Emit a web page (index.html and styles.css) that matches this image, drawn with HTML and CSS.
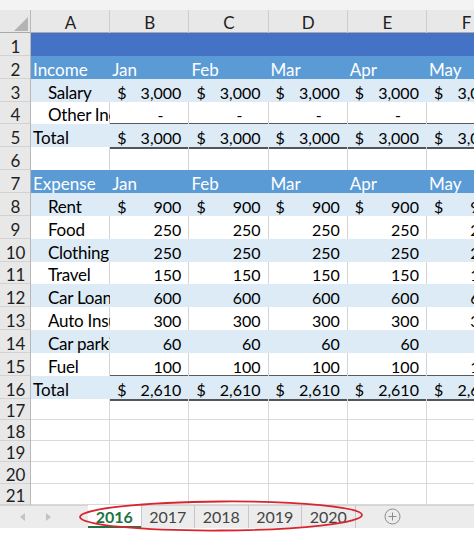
FILE: index.html
```html
<!DOCTYPE html>
<html>
<head>
<meta charset="utf-8">
<link rel="stylesheet" href="styles.css">
</head>
<body>
<div class="page">
  <div class="topbar"></div>
  <div class="grid">
    <table class="sheet">
      <colgroup>
        <col class="c-rn"><col class="c"><col class="c"><col class="c"><col class="c"><col class="c"><col class="c">
      </colgroup>
      <tr class="hdr">
        <th class="corner"><svg width="31" height="22" viewBox="0 0 31 22"><polygon points="14,20 28,20 28,6" fill="#b4b4b4"/></svg></th>
        <th>A</th><th>B</th><th>C</th><th>D</th><th>E</th><th>F</th>
      </tr>
      <tr class="rd dark">
        <th class="rn">1</th><td></td><td></td><td></td><td></td><td></td><td></td>
      </tr>
      <tr class="rd mid">
        <th class="rn">2</th><td class="lbl">Income</td><td class="lbl">Jan</td><td class="lbl">Feb</td><td class="lbl">Mar</td><td class="lbl">Apr</td><td class="lbl">May</td>
      </tr>
      <tr class="rd light">
        <th class="rn">3</th><td class="ind">Salary</td>
        <td><div class="acc"><span>$</span><span>3,000</span></div></td>
        <td><div class="acc"><span>$</span><span>3,000</span></div></td>
        <td><div class="acc"><span>$</span><span>3,000</span></div></td>
        <td><div class="acc"><span>$</span><span>3,000</span></div></td>
        <td><div class="acc"><span>$</span><span>3,000</span></div></td>
      </tr>
      <tr class="rd white">
        <th class="rn">4</th><td class="ind clip">Other Income</td>
        <td class="dash pre">-</td><td class="dash pre">-</td><td class="dash pre">-</td><td class="dash pre">-</td><td class="dash pre">-</td>
      </tr>
      <tr class="rd light">
        <th class="rn">5</th><td class="lbl">Total</td>
        <td><div class="acc"><span>$</span><span>3,000</span></div></td>
        <td><div class="acc"><span>$</span><span>3,000</span></div></td>
        <td><div class="acc"><span>$</span><span>3,000</span></div></td>
        <td><div class="acc"><span>$</span><span>3,000</span></div></td>
        <td><div class="acc"><span>$</span><span>3,000</span></div></td>
      </tr>
      <tr class="rd white">
        <th class="rn">6</th><td></td><td class="post"></td><td class="post"></td><td class="post"></td><td class="post"></td><td class="post"></td>
      </tr>
      <tr class="rd mid">
        <th class="rn">7</th><td class="lbl">Expense</td><td class="lbl">Jan</td><td class="lbl">Feb</td><td class="lbl">Mar</td><td class="lbl">Apr</td><td class="lbl">May</td>
      </tr>
      <tr class="rd light">
        <th class="rn">8</th><td class="ind">Rent</td>
        <td><div class="acc"><span>$</span><span>900</span></div></td>
        <td><div class="acc"><span>$</span><span>900</span></div></td>
        <td><div class="acc"><span>$</span><span>900</span></div></td>
        <td><div class="acc"><span>$</span><span>900</span></div></td>
        <td><div class="acc"><span>$</span><span>900</span></div></td>
      </tr>
      <tr class="rd white">
        <th class="rn">9</th><td class="ind">Food</td>
        <td class="num">250</td><td class="num">250</td><td class="num">250</td><td class="num">250</td><td class="num">250</td>
      </tr>
      <tr class="rd light">
        <th class="rn">10</th><td class="ind clip">Clothing</td>
        <td class="num">250</td><td class="num">250</td><td class="num">250</td><td class="num">250</td><td class="num">250</td>
      </tr>
      <tr class="rd white">
        <th class="rn">11</th><td class="ind">Travel</td>
        <td class="num">150</td><td class="num">150</td><td class="num">150</td><td class="num">150</td><td class="num">150</td>
      </tr>
      <tr class="rd light">
        <th class="rn">12</th><td class="ind clip">Car Loan</td>
        <td class="num">600</td><td class="num">600</td><td class="num">600</td><td class="num">600</td><td class="num">600</td>
      </tr>
      <tr class="rd white">
        <th class="rn">13</th><td class="ind clip">Auto Insurance</td>
        <td class="num">300</td><td class="num">300</td><td class="num">300</td><td class="num">300</td><td class="num">300</td>
      </tr>
      <tr class="rd light">
        <th class="rn">14</th><td class="ind clip">Car parking</td>
        <td class="num">60</td><td class="num">60</td><td class="num">60</td><td class="num">60</td><td class="num">60</td>
      </tr>
      <tr class="rd white">
        <th class="rn">15</th><td class="ind">Fuel</td>
        <td class="num pre">100</td><td class="num pre">100</td><td class="num pre">100</td><td class="num pre">100</td><td class="num pre">100</td>
      </tr>
      <tr class="rd light">
        <th class="rn">16</th><td class="lbl">Total</td>
        <td><div class="acc"><span>$</span><span>2,610</span></div></td>
        <td><div class="acc"><span>$</span><span>2,610</span></div></td>
        <td><div class="acc"><span>$</span><span>2,610</span></div></td>
        <td><div class="acc"><span>$</span><span>2,610</span></div></td>
        <td><div class="acc"><span>$</span><span>2,610</span></div></td>
      </tr>
      <tr class="rb blank">
        <th class="rn">17</th><td></td><td class="post"></td><td class="post"></td><td class="post"></td><td class="post"></td><td class="post"></td>
      </tr>
      <tr class="rb blank">
        <th class="rn">18</th><td></td><td></td><td></td><td></td><td></td><td></td>
      </tr>
      <tr class="rb blank">
        <th class="rn">19</th><td></td><td></td><td></td><td></td><td></td><td></td>
      </tr>
      <tr class="rb blank">
        <th class="rn">20</th><td></td><td></td><td></td><td></td><td></td><td></td>
      </tr>
      <tr class="rb blank">
        <th class="rn">21</th><td></td><td></td><td></td><td></td><td></td><td></td>
      </tr>
    </table>
  </div>
  <div class="tabbar">
    <div class="nav">
      <svg width="5" height="8" viewBox="0 0 5 8"><polygon points="5,0 5,8 0,4" fill="#c3c3c3"/></svg>
      <svg width="5" height="8" viewBox="0 0 5 8"><polygon points="0,0 0,8 5,4" fill="#c3c3c3"/></svg>
    </div>
    <div class="tab active">2016</div>
    <div class="tab">2017</div>
    <div class="tab">2018</div>
    <div class="tab">2019</div>
    <div class="tab">2020</div>
    <div class="add">
      <svg width="17" height="17" viewBox="0 0 17 17"><circle cx="8.5" cy="8.5" r="7.5" fill="none" stroke="#8c8c8c" stroke-width="1"/><path d="M8.5 4.5v8M4.5 8.5h8" stroke="#8c8c8c" stroke-width="1"/></svg>
    </div>
  </div>
  <svg class="ring" width="474" height="40" viewBox="0 0 474 40"><ellipse cx="221" cy="21" rx="141" ry="14.5" fill="none" stroke="#d7262e" stroke-width="1.8" transform="rotate(-0.4 221 21)"/></svg>
</div>
</body>
</html>
```
FILE: styles.css
```css
html, body {
  margin: 0;
  padding: 0;
  background: #ffffff;
}
body {
  font-family: "Lato", "Liberation Sans", sans-serif;
  font-size: 17px;
  color: #000000;
}
.page {
  position: relative;
  width: 474px;
  height: 535px;
  overflow: hidden;
  background: #ffffff;
}
.topbar {
  height: 10px;
  background: #f3f3f3;
}
.grid {
  height: 495px;
  overflow: hidden;
}
.sheet {
  border-collapse: separate;
  border-spacing: 0;
  table-layout: fixed;
  width: 506.2px;
}
col.c-rn { width: 31px; }
col.c { width: 79.2px; }

.sheet th, .sheet td {
  padding: 0;
  box-sizing: border-box;
  white-space: nowrap;
  vertical-align: bottom;
  line-height: 19px;
  font-weight: normal;
  text-align: left;
}
.sheet td.clip {
  overflow-x: clip;
  overflow-y: visible;
}

/* column headers */
.hdr th {
  height: 23px;
  background: #e8e8e8;
  color: #1f1f1f;
  text-align: center;
  padding-bottom: 1px;
  box-shadow: inset -1px 0 #cdcdcd, inset 0 -1px #a9a9a9;
}
.hdr th.corner {
  padding: 0;
  box-shadow: inset -1px 0 #b8b8b8, inset 0 -1px #a9a9a9;
}
.corner svg { display: block; }

/* row headers */
.sheet th.rn {
  background: #e8e8e8;
  color: #1f1f1f;
  text-align: center;
  box-shadow: inset -1px 0 #b8b8b8, inset 0 -1px #d2d2d2;
}

.rd th, .rd td { height: 22.86px; }
.rb th, .rb td { height: 21.2px; }

.dark td { background: #4472c4; }
.mid td { background: #5b9bd5; color: #ffffff; }
.light td { background: #ddebf7; }
.white td { background: #ffffff; box-shadow: inset -1px 0 #d4d4d4; }
.blank td { background: #ffffff; box-shadow: inset -1px -1px #d9d9d9; }

/* total borders */
.white td.pre { box-shadow: inset -1px 0 #d4d4d4, inset 0 -1px #5a5a5a; }
.white td.post { box-shadow: inset -1px 0 #d4d4d4, inset 0 2px #555555; }
.blank td.post { box-shadow: inset -1px -1px #d9d9d9, inset 0 2px #555555; }

.lbl { padding-left: 2px !important; }
.ind { padding-left: 17px !important; letter-spacing: -0.25px; }

.acc {
  display: flex;
  justify-content: space-between;
  padding: 0 8px 0 7px;
  font-size: 16px;
}
.num {
  text-align: right !important;
  padding-right: 8px !important;
  font-size: 16px;
}
.dash {
  text-align: right !important;
  padding-right: 26px !important;
  font-size: 16px;
}

/* sheet tabs */
.tabbar {
  display: flex;
  height: 23px;
  background: #ececec;
  box-shadow: inset 0 1px #d4d4d4;
  font-size: 16px;
}
.nav {
  width: 88px;
  display: flex;
  align-items: center;
  padding-left: 20px;
  gap: 21px;
  box-sizing: border-box;
}
.nav svg { display: block; }
.tab {
  width: 53.5px;
  box-sizing: border-box;
  text-align: center;
  line-height: 23px;
  color: #444444;
  border-right: 1px solid #c8c8c8;
}
.tab.active {
  background: #ffffff;
  color: #217346;
  font-weight: bold;
  box-shadow: inset 0 -2px #217346;
}
.add {
  margin-left: 28px;
  display: flex;
  align-items: center;
}
.add svg { display: block; }

.ring {
  position: absolute;
  left: 0;
  top: 495px;
}
```
